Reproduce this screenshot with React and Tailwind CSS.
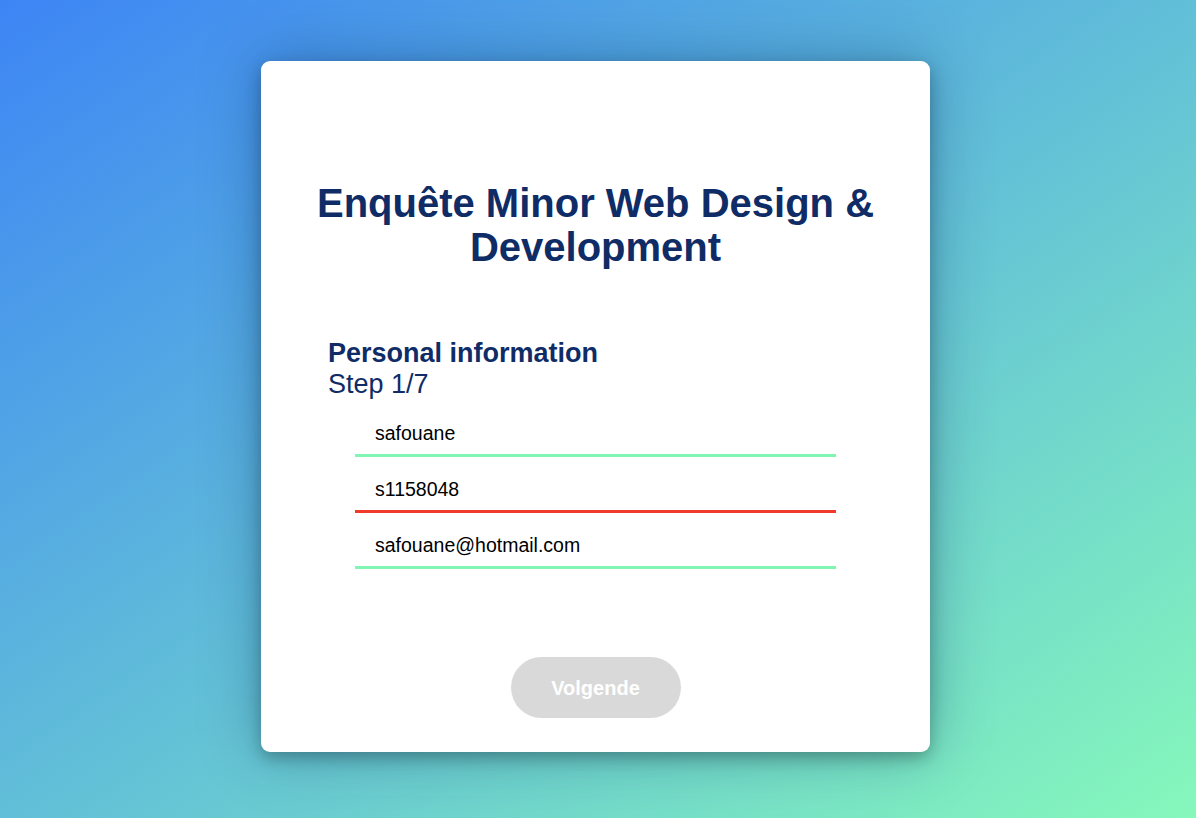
export default function App() {
  const font = { fontFamily: '"Liberation Sans", Arial, sans-serif' };
  return (
    <div
      className="w-full h-[818px] overflow-hidden bg-[linear-gradient(to_bottom_right,#3d85f5,#86f8bb)] flex items-start justify-center pt-[61px]"
      style={font}
    >
      <div className="w-[669px] h-[691px] bg-white rounded-[9px] shadow-[0_6px_16px_rgba(0,0,0,0.25),0_0_60px_rgba(0,40,90,0.35)] flex flex-col items-center ml-[-5px]">
        <h1 className="mt-[120px] w-full text-center text-[40px] leading-[44px] font-bold text-[#0f2c66] px-8">
          Enquête Minor Web Design &amp; Development
        </h1>
        <div className="self-stretch pl-[67px] mt-[69px] text-[#0f2c66]">
          <div className="text-[27px] leading-[31px] font-bold">Personal information</div>
          <div className="text-[27px] leading-[31px]">Step 1/7</div>
        </div>
        <div className="w-[481px] flex flex-col gap-[12px] mt-[13px]">
          {[
            ["safouane", "border-[#7ff7b3]"],
            ["s1158048", "border-[#f03a2b]"],
            ["safouane@hotmail.com", "border-[#7ff7b3]"],
          ].map(([v, b]) => (
            <div key={v} className={`h-[44px] border-b-[3px] ${b} flex items-center pl-[20px] text-[19.5px] text-black`}>
              {v}
            </div>
          ))}
        </div>
        <button className="mt-[88px] w-[170px] h-[61px] rounded-full bg-[#d9d9d9] text-white font-bold text-[20px]">
          Volgende
        </button>
      </div>
    </div>
  );
}
